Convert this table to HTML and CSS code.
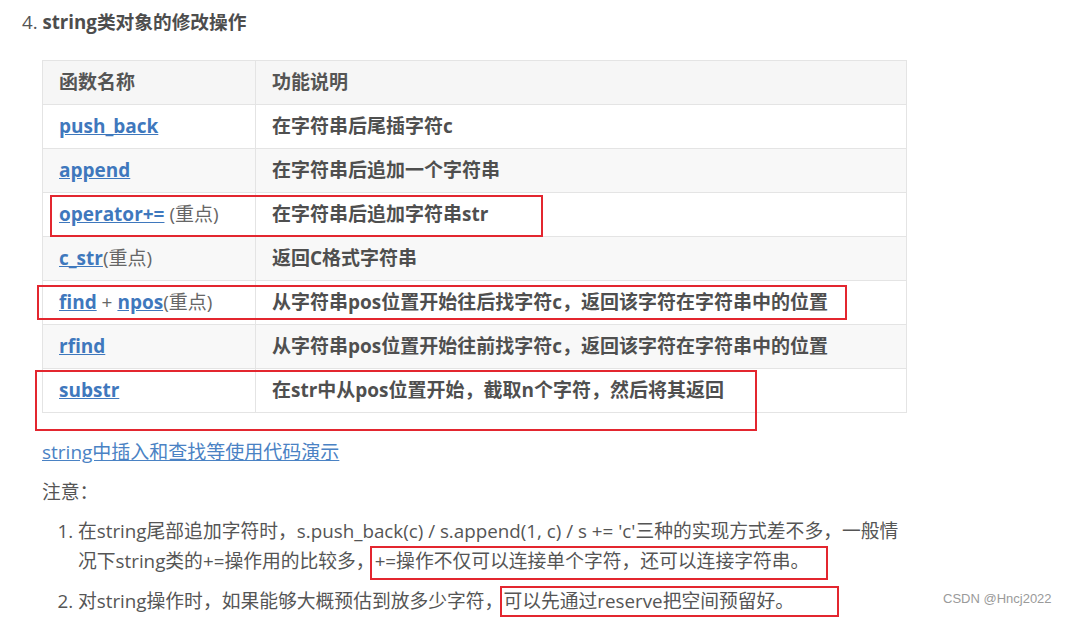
FILE: index.html
```html
<!DOCTYPE html>
<html lang="zh-CN">
<head>
    <meta charset="UTF-8">
    <meta name="viewport" content="width=device-width, initial-scale=1.0">
    <title>string类对象的修改操作</title>
    <link rel="stylesheet" href="styles.css">
</head>
<body>

    <div class="article">
        <h4 class="title"><span class="num">4.</span> string类对象的修改操作</h4>

        <div class="section">
            <table class="ops">
                <thead>
                    <tr>
                        <th class="col-name">函数名称</th>
                        <th>功能说明</th>
                    </tr>
                </thead>
                <tbody>
                    <tr>
                        <td><a href="#">push_back</a></td>
                        <td>在字符串后尾插字符c</td>
                    </tr>
                    <tr>
                        <td><a href="#">append</a></td>
                        <td>在字符串后追加一个字符串</td>
                    </tr>
                    <tr>
                        <td><a href="#">operator+=</a> <span class="key">(重点)</span></td>
                        <td>在字符串后追加字符串str</td>
                    </tr>
                    <tr>
                        <td><a href="#">c_str</a><span class="key">(重点)</span></td>
                        <td>返回C格式字符串</td>
                    </tr>
                    <tr>
                        <td><a href="#">find</a> <span class="plus">+</span> <a href="#">npos</a><span class="key">(重点)</span></td>
                        <td>从字符串pos位置开始往后找字符c，返回该字符在字符串中的位置</td>
                    </tr>
                    <tr>
                        <td><a href="#">rfind</a></td>
                        <td>从字符串pos位置开始往前找字符c，返回该字符在字符串中的位置</td>
                    </tr>
                    <tr>
                        <td><a href="#">substr</a></td>
                        <td>在str中从pos位置开始，截取n个字符，然后将其返回</td>
                    </tr>
                </tbody>
            </table>

            <p class="demo"><a href="#">string中插入和查找等使用代码演示</a></p>
            <p class="note">注意：</p>
            <ol class="notes">
                <li>在string尾部追加字符时，s.push_back(c) / s.append(1, c) / s += 'c'三种的实现方式差不多，一般情况下string类的+=操作用的比较多，+=操作不仅可以连接单个字符，还可以连接字符串。</li>
                <li>对string操作时，如果能够大概预估到放多少字符，可以先通过reserve把空间预留好。</li>
            </ol>
        </div>
    </div>

    <!-- 红框标注 -->
    <div class="mark mark-op"></div>
    <div class="mark mark-find"></div>
    <div class="mark mark-substr"></div>
    <div class="mark mark-plus"></div>
    <div class="mark mark-reserve"></div>

    <div class="watermark">CSDN @Hncj2022</div>

</body>
</html>
```

FILE: styles.css
```css
/* Reset */
* {
    margin: 0;
    padding: 0;
    box-sizing: border-box;
}

body {
    font-family: 'Open Sans', 'Noto Sans CJK SC', sans-serif;
    background: #fff;
    color: #555;
    width: 1068px;
    height: 617px;
    overflow: hidden;
    position: relative;
}

/* Contenido */
.article {
    padding: 9px 0 0 22px;
}

.title {
    font-size: 18.7px;
    line-height: 26px;
    font-weight: 700;
    color: #4d4d4d;
}

.title .num {
    font-weight: 400;
    color: #555;
}

.section {
    padding-left: 20px;
    width: 886px;
}

/* Tabla */
.ops {
    margin-top: 25px;
    width: 865px;
    border-collapse: collapse;
    font-size: 19px;
    font-weight: 700;
    color: #4f4f4f;
}

.ops th,
.ops td {
    border: 1px solid #e4e4e4;
    padding: 8px 16px;
    line-height: 27px;
    text-align: left;
    white-space: nowrap;
}

.ops th {
    background: #f6f6f6;
    color: #555;
}

.ops .col-name {
    width: 213px;
}

.ops tbody tr:nth-child(even) {
    background: #f8f8f8;
}

.ops a {
    color: #3f78bd;
    text-decoration: underline;
}

.ops .key,
.ops .plus {
    font-weight: 400;
    color: #666;
}

/* Texto */
.demo {
    margin-top: 25px;
    font-size: 19px;
    line-height: 28px;
}

.demo a {
    color: #4a82c4;
    text-decoration: underline;
}

.note {
    margin-top: 12px;
    font-size: 18.8px;
    line-height: 28px;
}

.notes {
    margin-top: 10px;
    padding-left: 36px;
    font-size: 18.8px;
    line-height: 30px;
}

.notes li + li {
    margin-top: 10px;
}

/* Marcas rojas */
.mark {
    position: absolute;
    border: 2px solid #e3262f;
}

.mark-op {
    left: 50px;
    top: 195px;
    width: 493px;
    height: 42px;
}

.mark-find {
    left: 37px;
    top: 285px;
    width: 810px;
    height: 35px;
}

.mark-substr {
    left: 35px;
    top: 370px;
    width: 722px;
    height: 61px;
}

.mark-plus {
    left: 370px;
    top: 546px;
    width: 458px;
    height: 34px;
}

.mark-reserve {
    left: 500px;
    top: 586px;
    width: 339px;
    height: 31px;
}

.watermark {
    position: absolute;
    left: 943px;
    top: 591px;
    font-family: 'Liberation Sans', Arial, sans-serif;
    font-size: 13px;
    color: #9a9a9a;
}
```
